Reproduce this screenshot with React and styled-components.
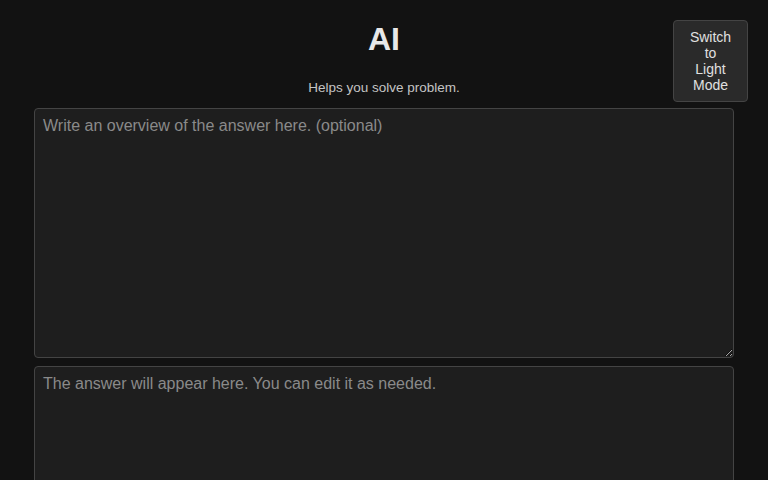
import React, { useState } from "react";
import styled, { createGlobalStyle } from "styled-components";

const GlobalStyle = createGlobalStyle`
  html, body {
    margin: 0;
    padding: 0;
    background: #121212;
    color: #e0e0e0;
    font-family: "Liberation Sans", Arial, sans-serif;
  }
  * { box-sizing: border-box; }
`;

const App = () => {
  const [overview, setOverview] = useState("");
  const [answer, setAnswer] = useState("");
  const [light, setLight] = useState(false);
  return (
    <>
      <GlobalStyle />
      <Page>
        <ThemeToggle onClick={() => setLight(!light)}>
          Switch to {light ? "Dark" : "Light"} Mode
        </ThemeToggle>
        <Title>AI</Title>
        <Subtitle>Helps you solve problem.</Subtitle>
        <Fields>
          <TextBox
            $height={250}
            value={overview}
            placeholder="Write an overview of the answer here. (optional)"
            onChange={(e) => setOverview(e.target.value)}
          />
          <TextBox
            $height={250}
            value={answer}
            placeholder="The answer will appear here. You can edit it as needed."
            onChange={(e) => setAnswer(e.target.value)}
          />
        </Fields>
      </Page>
    </>
  );
};

const Page = styled.div`
  position: relative;
  max-width: 700px;
  margin: 0 auto;
  padding-top: 21px;
`;
const Title = styled.h1`
  margin: 0;
  text-align: center;
  font-size: 32px;
  line-height: 37px;
  font-weight: bold;
  color: #e8e8e8;
`;
const Subtitle = styled.p`
  margin: 22px 0 13px;
  text-align: center;
  font-size: 13.5px;
  line-height: 15px;
  color: #c4c4c4;
`;
const Fields = styled.div`
  display: flex;
  flex-direction: column;
  gap: 8px;
`;
const TextBox = styled.textarea`
  display: block;
  width: 100%;
  height: ${(p) => p.$height}px;
  padding: 8px;
  background: #1e1e1e;
  color: #e0e0e0;
  border: 1px solid #444;
  border-radius: 4px;
  font-family: "Liberation Sans", Arial, sans-serif;
  font-size: 16px;
  line-height: 18px;
  &::placeholder {
    color: #8a8a8a;
  }
`;
const ThemeToggle = styled.button`
  position: fixed;
  top: 20px;
  right: 20px;
  width: 75px;
  padding: 8px 15px;
  background: #2a2a2a;
  color: #e0e0e0;
  border: 1px solid #444;
  border-radius: 4px;
  font-family: "Liberation Sans", Arial, sans-serif;
  font-size: 14px;
  line-height: 16px;
  cursor: pointer;
`;

export default App;
